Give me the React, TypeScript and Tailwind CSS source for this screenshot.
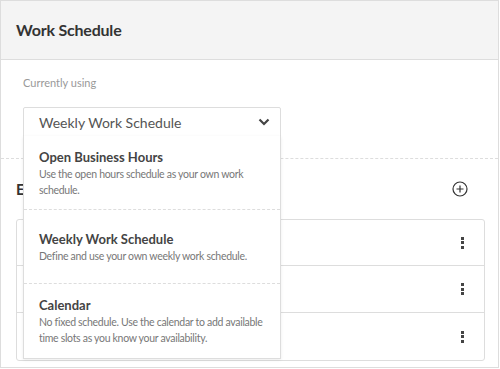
import React from "react";

const font = { fontFamily: "Lato, 'Noto Sans', sans-serif" };

function Kebab() {
  return (
    <div className="flex flex-col gap-[1.5px]">
      <div className="w-[3px] h-[3px] bg-[#444]" />
      <div className="w-[3px] h-[3px] bg-[#444]" />
      <div className="w-[3px] h-[3px] bg-[#444]" />
    </div>
  );
}

function Item({ title, desc, last }: { title: string; desc: string; last?: boolean }) {
  return (
    <div
      className={
        "h-[74px] flex flex-col justify-center px-[15px] " +
        (last ? "" : "border-b border-dashed border-[#ddd]")
      }
    >
      <div className="text-[13px] leading-[18px] font-bold text-[#444]">{title}</div>
      <div className="text-[10.5px] leading-[16px] tracking-[-0.3px] text-[#777]">{desc}</div>
    </div>
  );
}

export default function App() {
  return (
    <div className="w-[500px] h-[369px] bg-white" style={font}>
      <div className="relative w-[499px] h-[368px] border border-[#ddd] bg-white">
        <div className="h-[59px] bg-[#f4f4f4] border-b border-[#ddd] flex items-center px-[15px]">
          <span className="text-[16px] font-bold text-[#333] tracking-[-0.2px]">Work Schedule</span>
        </div>
        <div className="h-[99px] border-b border-dashed border-[#ddd] px-[22px] pt-[15px]">
          <div className="text-[11px] leading-[16px] text-[#999]">Currently using</div>
          <div className="mt-[16px] w-[258px] h-[30px] border border-[#ddd] rounded-t-[2px] flex items-center justify-between pl-[15px] pr-[10px]">
            <span className="text-[14px] text-[#555]">Weekly Work Schedule</span>
            <svg width="12" height="8" viewBox="0 0 12 8">
              <path d="M1.5 1.5 L6 6 L10.5 1.5" fill="none" stroke="#444" strokeWidth="2.2" />
            </svg>
          </div>
        </div>
        <div className="px-[15px]">
          <div className="h-[60px] flex items-center justify-between">
            <span className="text-[15px] font-bold text-[#333]">Exceptions</span>
            <svg width="16" height="16" viewBox="0 0 16 16" className="mr-[15px]">
              <circle cx="8" cy="8" r="7" fill="none" stroke="#333" strokeWidth="1.2" />
              <path d="M8 4.5 V11.5 M4.5 8 H11.5" stroke="#333" strokeWidth="1.2" />
            </svg>
          </div>
          <div className="w-[469px] border border-[#ddd] rounded-[3px]">
            <div className="h-[46px] border-b border-[#ddd] flex items-center justify-end pr-[20px]">
              <Kebab />
            </div>
            <div className="h-[47px] border-b border-[#ddd] flex items-center justify-end pr-[20px]">
              <Kebab />
            </div>
            <div className="h-[47px] flex items-center justify-end pr-[20px]">
              <Kebab />
            </div>
          </div>
        </div>
        <div className="absolute left-[22px] top-[135px] w-[258px] bg-white border border-t-0 border-[#ddd] shadow-[0_1px_3px_rgba(0,0,0,0.08)]">
          <Item title="Open Business Hours" desc="Use the open hours schedule as your own work schedule." />
          <Item title="Weekly Work Schedule" desc="Define and use your own weekly work schedule." />
          <Item
            title="Calendar"
            desc="No fixed schedule. Use the calendar to add available time slots as you know your availability."
            last
          />
        </div>
      </div>
    </div>
  );
}
